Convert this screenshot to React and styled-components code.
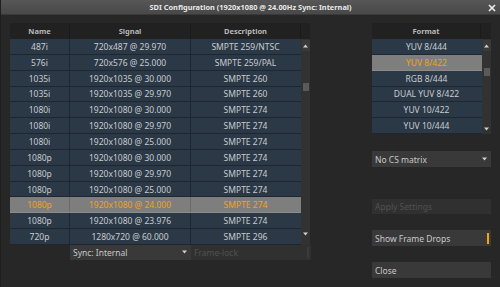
import styled, { createGlobalStyle } from 'styled-components'

const GlobalStyle = createGlobalStyle`
  html, body {
    margin: 0;
    padding: 0;
    background: #272727;
  }
  * {
    box-sizing: border-box;
  }
`

const ROWS = [
  ['487i', '720x487 @ 29.970', 'SMPTE 259/NTSC'],
  ['576i', '720x576 @ 25.000', 'SMPTE 259/PAL'],
  ['1035i', '1920x1035 @ 30.000', 'SMPTE 260'],
  ['1035i', '1920x1035 @ 29.970', 'SMPTE 260'],
  ['1080i', '1920x1080 @ 30.000', 'SMPTE 274'],
  ['1080i', '1920x1080 @ 29.970', 'SMPTE 274'],
  ['1080i', '1920x1080 @ 25.000', 'SMPTE 274'],
  ['1080p', '1920x1080 @ 30.000', 'SMPTE 274'],
  ['1080p', '1920x1080 @ 29.970', 'SMPTE 274'],
  ['1080p', '1920x1080 @ 25.000', 'SMPTE 274'],
  ['1080p', '1920x1080 @ 24.000', 'SMPTE 274'],
  ['1080p', '1920x1080 @ 23.976', 'SMPTE 274'],
  ['720p', '1280x720 @ 60.000', 'SMPTE 296'],
]
const SELECTED_ROW = 10

const FORMATS = ['YUV 8/444', 'YUV 8/422', 'RGB 8/444', 'DUAL YUV 8/422', 'YUV 10/422', 'YUV 10/444']
const SELECTED_FORMAT = 1

const Window = styled.div`
  width: 500px;
  height: 287px;
  display: flex;
  flex-direction: column;
  background: #272727;
  border-left: 1px solid #1f1f1f;
  font-family: 'Noto Sans', 'Open Sans', sans-serif;
  color: #c4c4c4;
  overflow: hidden;
`

const TitleBar = styled.div`
  height: 15px;
  flex: none;
  display: flex;
  align-items: center;
  justify-content: center;
  position: relative;
  background: linear-gradient(#575757, #484848);
  border-bottom: 1px solid #3a3a3a;
  color: #e8e8e8;
  font-size: 7.4px;
  font-weight: 700;
`

const CloseButton = styled.svg`
  position: absolute;
  right: 4px;
  top: 4px;
`

const Body = styled.div`
  display: flex;
  padding: 8px 0 0 9px;
`

const LeftPanel = styled.div`
  width: 300px;
  display: flex;
  flex-direction: column;
`

const HeaderRow = styled.div`
  display: grid;
  grid-template-columns: ${p => p.$cols};
  height: 16px;
  background: #212121;
`

const HeaderCell = styled.div`
  display: flex;
  align-items: center;
  justify-content: center;
  font-size: 7.5px;
  font-weight: 700;
  color: #b8b8b8;
  border-right: 1px solid ${p => (p.$last ? 'transparent' : '#1a1a1a')};
`

const ListArea = styled.div`
  display: flex;
`

const Rows = styled.div`
  flex: 1;
  display: flex;
  flex-direction: column;
`

const Row = styled.div`
  display: grid;
  grid-template-columns: ${p => p.$cols};
  height: 15.85px;
  background: ${p => (p.$selected ? '#7e7e7e' : '#2b3947')};
  border-bottom: 1px solid ${p => (p.$selected ? '#8c8c8c' : '#1e2731')};
  color: ${p => (p.$selected ? '#f0a417' : '#c8cbcf')};
`

const Cell = styled.div`
  display: flex;
  align-items: center;
  justify-content: center;
  font-size: 8.5px;
  white-space: nowrap;
  border-right: 1px solid ${p => (p.$last ? 'transparent' : p.$selected ? '#6a6a6a' : '#1e2731')};
`

const Scrollbar = styled.div`
  width: 9px;
  flex: none;
  display: flex;
  flex-direction: column;
  align-items: center;
  background: #323232;
  padding-top: 1px;
`

const ArrowBox = styled.div`
  width: 8px;
  height: 11px;
  display: flex;
  align-items: center;
  justify-content: center;
  background: ${p => (p.$plain ? 'transparent' : '#3a3a3a')};
`

const Thumb = styled.div`
  width: 6px;
  height: 8px;
  margin-top: ${p => p.$offset}px;
  background: #5a5a5a;
`

const Spacer = styled.div`
  flex: 1;
`

const FooterRow = styled.div`
  display: grid;
  grid-template-columns: 60px 121px 120px;
  height: 15px;
`

const SelectBox = styled.div`
  display: flex;
  align-items: center;
  justify-content: space-between;
  padding: 0 4px 0 3px;
  height: ${p => p.$h || 15}px;
  background: #393939;
  font-size: 8.5px;
  color: #c8c8c8;
`

const ToggleBox = styled.div`
  display: flex;
  align-items: center;
  justify-content: space-between;
  padding: 0 2px 0 3px;
  height: ${p => p.$h || 15}px;
  background: ${p => (p.$disabled ? '#303030' : '#393939')};
  font-size: 8.5px;
  color: ${p => (p.$disabled ? '#505050' : '#c8c8c8')};
`

const Indicator = styled.div`
  width: 2px;
  height: 11px;
  background: ${p => (p.$on ? '#f0a417' : '#3c3c3c')};
`

const RightPanel = styled.div`
  width: 119px;
  margin-left: 62px;
  display: flex;
  flex-direction: column;
`

const Stack = styled.div`
  display: flex;
  flex-direction: column;
  margin-top: ${p => p.$mt}px;
`

const Triangle = ({ down }) => (
  <svg width='5' height='4' viewBox='0 0 5 4'>
    <path d={down ? 'M0 0.5 H5 L2.5 3.5 Z' : 'M0 3.5 H5 L2.5 0.5 Z'} fill='#d0d0d0' />
  </svg>
)

const Button = ({ children, h }) => <ToggleBox $h={h}>{children}</ToggleBox>

const App = () => {
  const mainCols = '60px 121px 110px 9px'
  const rowCols = '60px 121px 110px'

  return (
    <>
      <GlobalStyle />
      <Window>
        <TitleBar>
          SDI Configuration (1920x1080 @ 24.00Hz Sync: Internal)
          <CloseButton width='8' height='8' viewBox='0 0 8 8'>
            <path d='M1 1 L7 7 M7 1 L1 7' stroke='#ececec' strokeWidth='1.7' />
          </CloseButton>
        </TitleBar>
        <Body>
          <LeftPanel>
            <HeaderRow $cols={mainCols}>
              <HeaderCell>Name</HeaderCell>
              <HeaderCell>Signal</HeaderCell>
              <HeaderCell>Description</HeaderCell>
              <HeaderCell $last />
            </HeaderRow>
            <ListArea>
              <Rows>
                {ROWS.map(([name, signal, desc], i) => {
                  const selected = i === SELECTED_ROW
                  return (
                    <Row key={i} $cols={rowCols} $selected={selected}>
                      <Cell $selected={selected}>{name}</Cell>
                      <Cell $selected={selected}>{signal}</Cell>
                      <Cell $selected={selected} $last>{desc}</Cell>
                    </Row>
                  )
                })}
              </Rows>
              <Scrollbar>
                <ArrowBox>
                  <Triangle />
                </ArrowBox>
                <Thumb $offset={32} />
                <Spacer />
                <ArrowBox $plain>
                  <Triangle down />
                </ArrowBox>
                <div style={{ height: 5 }} />
              </Scrollbar>
            </ListArea>
            <FooterRow>
              <div />
              <SelectBox>
                Sync: Internal
                <Triangle down />
              </SelectBox>
              <ToggleBox $disabled>
                Frame-lock
                <Indicator />
              </ToggleBox>
            </FooterRow>
          </LeftPanel>
          <RightPanel>
            <HeaderRow $cols='109px 10px'>
              <HeaderCell>Format</HeaderCell>
              <HeaderCell $last />
            </HeaderRow>
            <ListArea>
              <Rows>
                {FORMATS.map((f, i) => {
                  const selected = i === SELECTED_FORMAT
                  return (
                    <Row key={f} $cols='1fr' $selected={selected}>
                      <Cell $selected={selected} $last>{f}</Cell>
                    </Row>
                  )
                })}
              </Rows>
              <Scrollbar>
                <ArrowBox>
                  <Triangle />
                </ArrowBox>
                <Thumb $offset={17} />
                <Spacer />
                <ArrowBox $plain>
                  <Triangle down />
                </ArrowBox>
              </Scrollbar>
            </ListArea>
            <Stack $mt={17}>
              <SelectBox $h={16}>
                No CS matrix
                <Triangle down />
              </SelectBox>
            </Stack>
            <Stack $mt={32}>
              <ToggleBox $disabled $h={15}>
                Apply Settings
              </ToggleBox>
            </Stack>
            <Stack $mt={16}>
              <ToggleBox $h={16}>
                Show Frame Drops
                <Indicator $on />
              </ToggleBox>
            </Stack>
            <Stack $mt={16}>
              <Button h={16}>Close</Button>
            </Stack>
          </RightPanel>
        </Body>
      </Window>
    </>
  )
}

export default App
